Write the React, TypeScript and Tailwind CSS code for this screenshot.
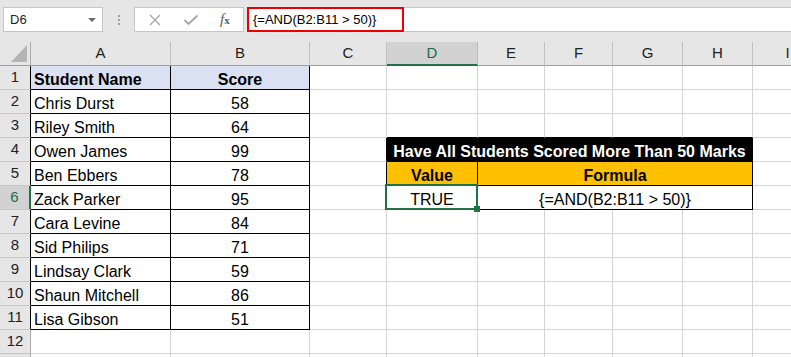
import React from 'react';

const students: [string, number][] = [
  ['Chris Durst', 58],
  ['Riley Smith', 64],
  ['Owen James', 99],
  ['Ben Ebbers', 78],
  ['Zack Parker', 95],
  ['Cara Levine', 84],
  ['Sid Philips', 71],
  ['Lindsay Clark', 59],
  ['Shaun Mitchell', 86],
  ['Lisa Gibson', 51],
];

const columns = ['A', 'B', 'C', 'D', 'E', 'F', 'G', 'H', 'I'];
const gridCols = 'grid grid-cols-[31px_140px_139px_77px_91px_67px_68px_70px_70px_70px]';
const cell = 'h-[24px] border-r border-b flex items-end whitespace-nowrap text-[16px] leading-[18px] text-black';

function RowHead({ r }: { r: number }) {
  const selected = r === 6;
  const right = selected
    ? 'border-r-2 border-r-[#217346] bg-[#d2d2d2] text-[#1e6b43]'
    : r <= 11
      ? 'border-r border-r-black bg-[#e6e6e6] text-[#222]'
      : 'border-r border-r-[#ababab] bg-[#e6e6e6] text-[#222]';
  return (
    <div className={`h-[24px] border-b border-b-[#c6c6c6] flex items-center justify-center text-[15px] ${right}`}>
      {r <= 12 ? r : ''}
    </div>
  );
}

function Row({ r }: { r: number }) {
  const inData = r >= 1 && r <= 11;
  const head = r === 1;
  const student = r >= 2 && r <= 11 ? students[r - 2] : null;
  const abBorder = inData ? 'border-r-black border-b-black' : 'border-r-[#d4d4d4] border-b-[#d4d4d4]';
  const cRight = r >= 4 && r <= 6 ? 'border-r-black' : 'border-r-[#d4d4d4]';
  const topOfBox = r === 3 ? 'border-b-black' : 'border-b-[#d4d4d4]';

  return (
    <div className={gridCols}>
      <RowHead r={r} />
      <div className={`${cell} ${abBorder} pl-[3px] ${head ? 'bg-[#d9e1f2] font-bold' : ''}`}>
        {head ? 'Student Name' : student ? student[0] : ''}
      </div>
      <div className={`${cell} ${abBorder} justify-center ${head ? 'bg-[#d9e1f2] font-bold' : 'text-[15px]'}`}>
        {head ? 'Score' : student ? student[1] : ''}
      </div>
      <div className={`${cell} ${cRight} border-b-[#d4d4d4]`} />

      {r === 4 && (
        <div className={`${cell} col-span-5 border-r-black border-b-black bg-black text-white font-bold text-[15.5px] justify-center`}>
          Have All Students Scored More Than 50 Marks
        </div>
      )}
      {r === 5 && (
        <>
          <div className={`${cell} border-r-black border-b-black bg-[#ffc000] font-bold justify-center`}>Value</div>
          <div className={`${cell} col-span-4 border-r-black border-b-black bg-[#ffc000] font-bold justify-center`}>
            Formula
          </div>
        </>
      )}
      {r === 6 && (
        <>
          <div className={`${cell} relative border-r-black border-b-black justify-center`}>
            TRUE
            <div className="absolute -left-[2px] -top-[2px] w-[calc(100%+3px)] h-[calc(100%+3px)] border-2 border-[#217346] z-10 pointer-events-none">
              <div className="absolute -right-[4px] -bottom-[4px] w-[6px] h-[6px] bg-[#217346]" />
            </div>
          </div>
          <div className={`${cell} col-span-4 border-r-black border-b-black justify-center text-[15px]`}>
            {'{=AND(B2:B11 > 50)}'}
          </div>
        </>
      )}
      {(r < 4 || r > 6) &&
        ['D', 'E', 'F', 'G', 'H'].map((c) => (
          <div key={c} className={`${cell} border-r-[#d4d4d4] ${topOfBox}`} />
        ))}
      <div className={`${cell} border-r-[#d4d4d4] border-b-[#d4d4d4]`} />
    </div>
  );
}

function FormulaBar() {
  return (
    <div className="h-[42px] bg-[#e6e6e6] flex items-start pt-[7px]">
      <div className="ml-[3px] w-[100px] h-[25px] bg-white border border-[#c6c6c6] flex items-center justify-between pl-[6px] pr-[6px]">
        <span className="text-[13px] text-[#222]">D6</span>
        <span className="w-0 h-0 border-l-[4px] border-r-[4px] border-t-[4px] border-l-transparent border-r-transparent border-t-[#6b6b6b]" />
      </div>
      <div className="w-[31px] h-[25px] flex flex-col items-center justify-center gap-[2px]">
        <span className="w-[2px] h-[2px] bg-[#a0a0a0]" />
        <span className="w-[2px] h-[2px] bg-[#a0a0a0]" />
        <span className="w-[2px] h-[2px] bg-[#a0a0a0]" />
      </div>
      <div className="w-[110px] h-[25px] bg-white border border-[#c6c6c6] flex items-center pl-[12px]">
        <svg width="14" height="12" viewBox="0 0 14 12" className="ml-[1px]">
          <path d="M2 1 L12 11 M12 1 L2 11" stroke="#a6a6a6" strokeWidth="1.3" fill="none" />
        </svg>
        <svg width="16" height="12" viewBox="0 0 16 12" className="ml-[21px]">
          <path d="M1.5 6 L5.5 10 L14.5 1.5" stroke="#a6a6a6" strokeWidth="1.8" fill="none" />
        </svg>
        <span className="ml-[21px] font-['Liberation_Serif',serif] italic text-[#5a5a5a] text-[15px] leading-none">
          f<span className="text-[11px] not-italic font-bold">x</span>
        </span>
      </div>
      <div className="ml-[3px] flex-1 h-[25px] bg-white border-y border-[#c6c6c6] flex">
        <div className="w-[157px] h-[25px] -mt-[1px] border-2 border-[#ee0000] flex items-center pl-[4px] text-[13px] text-black whitespace-nowrap">
          {'{=AND(B2:B11 > 50)}'}
        </div>
      </div>
    </div>
  );
}

function ColumnHeader() {
  return (
    <div className={gridCols}>
      <div className="h-[24px] bg-[#e6e6e6] border-r border-r-[#ababab] border-b border-b-[#9f9f9f] flex items-end justify-end pr-[3px] pb-[3px]">
        <svg width="16" height="17" viewBox="0 0 16 17">
          <polygon points="16,0 16,17 0,17" fill="#b4b4b4" />
        </svg>
      </div>
      {columns.map((c) =>
        c === 'D' ? (
          <div
            key={c}
            className="h-[24px] bg-[#d2d2d2] border-r border-r-[#b8b8b8] border-b-2 border-b-[#217346] flex items-center justify-center text-[15px] text-[#1e6b43]"
          >
            {c}
          </div>
        ) : (
          <div
            key={c}
            className="h-[24px] bg-[#e6e6e6] border-r border-r-[#c0c0c0] border-b border-b-[#9f9f9f] flex items-center justify-center text-[15px] text-[#222]"
          >
            {c}
          </div>
        )
      )}
    </div>
  );
}

export default function App() {
  return (
    <div className="w-[791px] h-[357px] overflow-hidden bg-white font-['Liberation_Sans',Arial,sans-serif]">
      <FormulaBar />
      <div className="w-[822px]">
        <ColumnHeader />
        {Array.from({ length: 13 }, (_, i) => (
          <Row key={i + 1} r={i + 1} />
        ))}
      </div>
    </div>
  );
}
